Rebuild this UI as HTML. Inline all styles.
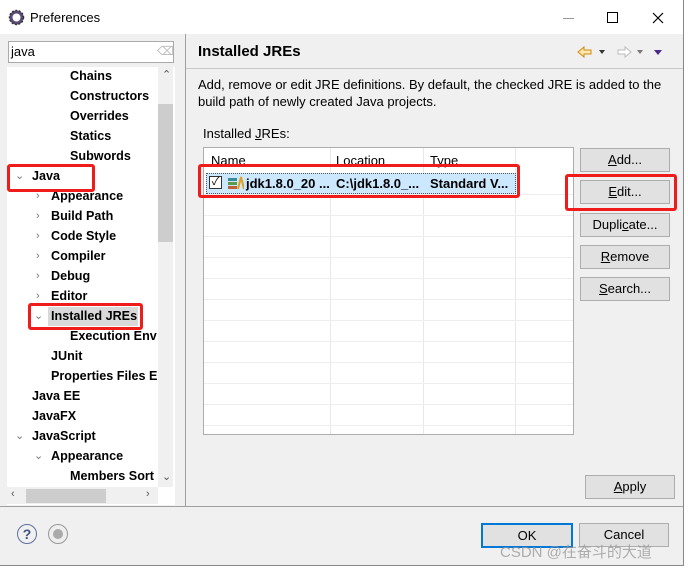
<!DOCTYPE html>
<html><head><style>
body{margin:0;width:688px;height:568px;background:#fff;position:relative;overflow:hidden;font-family:"Liberation Sans","Noto Sans CJK SC",sans-serif;font-size:13px;color:#000}
.a{position:absolute}
.t{position:absolute;font-weight:bold;white-space:nowrap;line-height:20px;font-size:12.6px}
.chev{position:absolute;font-size:11px;color:#777;line-height:20px}
.btn{position:absolute;left:580px;width:88px;height:22px;border:1px solid #adadad;background:#e1e1e1;text-align:center;line-height:22px;font-size:13px}
.red{position:absolute;border:3px solid #f01c1c;border-radius:3px}
.hl{position:absolute;top:0;bottom:0;width:1px;background:#e8e8e8}
.rl{position:absolute;left:0;right:0;height:1px;background:#eeeeee}
</style></head><body>
<div class="a" style="left:0;top:0;width:683px;height:565px;border-right:1px solid #888;border-bottom:1px solid #888;background:#f0f0f0"></div>
<div class="a" style="left:0;top:0;width:683px;height:34px;background:#fff"></div>
<svg class="a" style="left:8px;top:9px" width="17" height="17" viewBox="0 0 17 17"><circle cx="8.5" cy="8.5" r="7" fill="#5a4a78" stroke="#333" stroke-width="1.5" stroke-dasharray="2 1.5"/><circle cx="8.5" cy="8.5" r="4" fill="#fff"/></svg>
<div class="a" style="left:30px;top:10px;font-size:13px">Preferences</div>
<div class="a" style="left:563px;top:18px;width:11px;height:1px;background:#999"></div>
<div class="a" style="left:607px;top:12px;width:9px;height:9px;border:1px solid #000"></div>
<svg class="a" style="left:652px;top:12px" width="12" height="12"><path d="M1 1L11 11M11 1L1 11" stroke="#000" stroke-width="1.2"/></svg>
<!-- left -->
<div class="a" style="left:0;top:34px;width:184px;height:472px;background:#f0f0f0"></div>
<div class="a" style="left:8px;top:41px;width:164px;height:20px;border:1px solid #aaa;background:#fff"></div>
<div class="a" style="left:11px;top:44px">java</div>
<div class="a" style="left:157px;top:44px;color:#bbb;font-size:12px">⌫</div>
<div class="a" style="left:7px;top:67px;width:168px;height:438px;background:#fff"></div>
<div class="a" style="left:158px;top:67px;width:15px;height:420px;background:#f0f0f0"></div>
<div class="a" style="left:158px;top:104px;width:15px;height:138px;background:#cdcdcd"></div>
<div class="a" style="left:162px;top:68px;font-size:11px;color:#555">⌃</div>
<div class="a" style="left:162px;top:470px;font-size:11px;color:#555">⌄</div>
<div class="a" style="left:7px;top:487px;width:151px;height:17px;background:#f0f0f0"></div>
<div class="a" style="left:26px;top:489px;width:80px;height:14px;background:#cdcdcd"></div>
<div class="a" style="left:11px;top:488px;font-size:11px;color:#555">‹</div>
<div class="a" style="left:146px;top:488px;font-size:11px;color:#555">›</div>
<div class="t" style="left:70px;top:66px">Chains</div>
<div class="t" style="left:70px;top:86px">Constructors</div>
<div class="t" style="left:70px;top:106px">Overrides</div>
<div class="t" style="left:70px;top:126px">Statics</div>
<div class="t" style="left:70px;top:146px">Subwords</div>
<div class="chev" style="left:15px;top:166px">⌄</div><div class="t" style="left:32px;top:166px">Java</div>
<div class="chev" style="left:36px;top:186px">›</div><div class="t" style="left:51px;top:186px">Appearance</div>
<div class="chev" style="left:36px;top:206px">›</div><div class="t" style="left:51px;top:206px">Build Path</div>
<div class="chev" style="left:36px;top:226px">›</div><div class="t" style="left:51px;top:226px">Code Style</div>
<div class="chev" style="left:36px;top:246px">›</div><div class="t" style="left:51px;top:246px">Compiler</div>
<div class="chev" style="left:36px;top:266px">›</div><div class="t" style="left:51px;top:266px">Debug</div>
<div class="chev" style="left:36px;top:286px">›</div><div class="t" style="left:51px;top:286px">Editor</div>
<div class="a" style="left:48px;top:307px;width:90px;height:19px;background:#d9d9d9"></div>
<div class="chev" style="left:34px;top:306px">⌄</div><div class="t" style="left:51px;top:306px">Installed JREs</div>
<div class="t" style="left:70px;top:326px;width:87px;overflow:hidden">Execution Env</div>
<div class="t" style="left:51px;top:346px">JUnit</div>
<div class="t" style="left:51px;top:366px;width:106px;overflow:hidden">Properties Files E</div>
<div class="t" style="left:32px;top:386px">Java EE</div>
<div class="t" style="left:32px;top:406px">JavaFX</div>
<div class="chev" style="left:15px;top:426px">⌄</div><div class="t" style="left:32px;top:426px">JavaScript</div>
<div class="chev" style="left:34px;top:446px">⌄</div><div class="t" style="left:51px;top:446px">Appearance</div>
<div class="t" style="left:70px;top:466px;width:87px;overflow:hidden">Members Sort</div>
<div class="a" style="left:185px;top:34px;width:1px;height:472px;background:#a0a0a0"></div>
<!-- right -->
<div class="a" style="left:186px;top:68px;width:497px;height:1px;background:#c8c8c8"></div>
<div class="a" style="left:198px;top:43px;font-size:15px;font-weight:bold">Installed JREs</div>
<svg class="a" style="left:576px;top:44px" width="100" height="16"><path d="M2 8 L8 3 L8 6 L15 6 L15 10 L8 10 L8 13 Z" fill="#fde8b0" stroke="#d08a10"/><path d="M23 6 l6 0 l-3 4z" fill="#333"/><path d="M55 8 L49 3 L49 6 L42 6 L42 10 L49 10 L49 13 Z" fill="#fff" stroke="#bbb"/><path d="M61 6 l6 0 l-3 4z" fill="#777"/><path d="M78 6 l8 0 l-4 5z" fill="#4a2a8a"/></svg>
<div class="a" style="left:198px;top:76px;line-height:17px;width:475px">Add, remove or edit JRE definitions. By default, the checked JRE is added to the build path of newly created Java projects.</div>
<div class="a" style="left:203px;top:126px">Installed <u>J</u>REs:</div>
<div class="a" style="left:203px;top:147px;width:369px;height:286px;border:1px solid #adadad;background:#fff;overflow:hidden">
 <div class="hl" style="left:126px"></div><div class="hl" style="left:219px"></div><div class="hl" style="left:311px"></div>
 <div class="rl" style="top:46px"></div><div class="rl" style="top:67px"></div><div class="rl" style="top:88px"></div><div class="rl" style="top:109px"></div><div class="rl" style="top:130px"></div><div class="rl" style="top:151px"></div><div class="rl" style="top:172px"></div><div class="rl" style="top:193px"></div><div class="rl" style="top:214px"></div><div class="rl" style="top:235px"></div><div class="rl" style="top:256px"></div><div class="rl" style="top:277px"></div>
 <div class="a" style="left:7px;top:5px">Name</div><div class="a" style="left:132px;top:5px">Location</div><div class="a" style="left:226px;top:5px">Type</div>
 <div class="a" style="left:2px;top:25px;width:308px;height:19px;background:#cce8ff;border:1px dotted #555"></div>
 <div class="a" style="left:5px;top:28px;width:11px;height:11px;border:1px solid #333;background:#fff;font-size:11px;line-height:11px;text-align:center">✓</div>
 <svg class="a" style="left:24px;top:28px" width="16" height="14"><rect x="0" y="2" width="9" height="3" fill="#3a8a9a"/><rect x="0" y="6" width="9" height="3" fill="#5a9a4a"/><rect x="0" y="10" width="9" height="3" fill="#c0603a"/><path d="M10 13 L13 1 L16 13" fill="none" stroke="#e0a020" stroke-width="2"/></svg>
 <div class="a" style="left:42px;top:28px;font-weight:bold">jdk1.8.0_20 ...</div>
 <div class="a" style="left:132px;top:28px;font-weight:bold">C:\jdk1.8.0_...</div>
 <div class="a" style="left:226px;top:28px;font-weight:bold">Standard V...</div>
</div>
<div class="btn" style="top:148px"><u>A</u>dd...</div>
<div class="btn" style="top:180px"><u>E</u>dit...</div>
<div class="btn" style="top:213px">Dupli<u>c</u>ate...</div>
<div class="btn" style="top:245px"><u>R</u>emove</div>
<div class="btn" style="top:277px"><u>S</u>earch...</div>
<div class="btn" style="left:585px;top:475px"><u>A</u>pply</div>
<div class="a" style="left:0;top:506px;width:683px;height:1px;background:#a0a0a0"></div>
<div class="a" style="left:17px;top:524px;width:18px;height:18px;border:1.5px solid #6070a0;border-radius:50%;text-align:center;line-height:18px;font-size:14px;color:#405080;font-weight:bold">?</div>
<div class="a" style="left:48px;top:524px;width:18px;height:18px;border:1.5px solid #999;border-radius:50%;background:#eee"></div>
<div class="a" style="left:53px;top:529px;width:10px;height:10px;border-radius:50%;background:#aaa"></div>
<div class="btn" style="left:481px;top:523px;border:2px solid #0078d7;height:21px;line-height:21px">OK</div>
<div class="btn" style="left:579px;top:523px">Cancel</div>
<div class="a" style="left:500px;top:541px;font-size:15px;color:rgba(150,150,150,0.75)">CSDN @在奋斗的大道</div>
<div class="red" style="left:7px;top:164px;width:82px;height:22px"></div>
<div class="red" style="left:28px;top:303px;width:109px;height:21px"></div>
<div class="red" style="left:198px;top:164px;width:316px;height:28px"></div>
<div class="red" style="left:565px;top:174px;width:106px;height:31px"></div>
</body></html>
